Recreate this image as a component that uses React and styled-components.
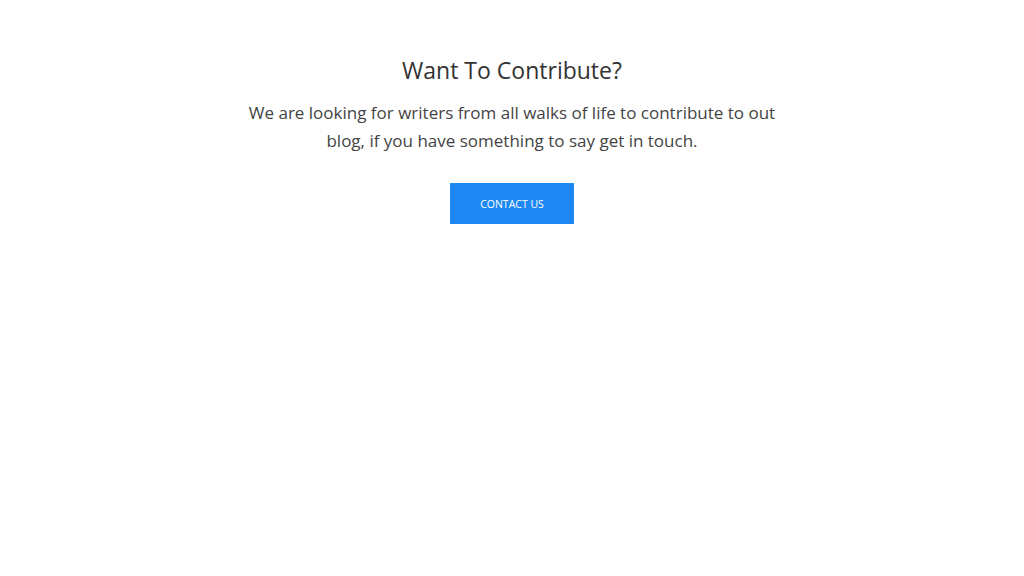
import React from 'react';
import styled, { createGlobalStyle } from 'styled-components';

const GlobalStyle = createGlobalStyle`
  html, body {
    margin: 0;
    padding: 0;
    background: #fff;
  }
  body {
    font-family: "Open Sans", "Noto Sans", sans-serif;
    color: #333;
  }
`;

const Section = styled.section`
  display: flex;
  flex-direction: column;
  align-items: center;
  padding-top: 54px;
  text-align: center;
`;

const Title = styled.h2`
  margin: 0;
  font-size: 23px;
  font-weight: 400;
  line-height: 32px;
  color: #333;
`;

const Text = styled.p`
  margin: 13px 0 0;
  width: 560px;
  font-size: 17px;
  line-height: 28px;
  color: #444;
`;

const ContactButton = styled.button`
  margin-top: 28px;
  width: 124px;
  height: 41px;
  border: none;
  border-radius: 0;
  background-color: #1e88f2;
  color: #fff;
  font-family: "Open Sans", "Noto Sans", sans-serif;
  font-size: 10.5px;
  text-transform: uppercase;
  cursor: pointer;
`;

const App = () => {
  return (
    <>
      <GlobalStyle />
      <Section>
        <Title>Want To Contribute?</Title>
        <Text>
          We are looking for writers from all walks of life to contribute to out
          blog, if you have something to say get in touch.
        </Text>
        <ContactButton>Contact Us</ContactButton>
      </Section>
    </>
  );
};

export default App;
